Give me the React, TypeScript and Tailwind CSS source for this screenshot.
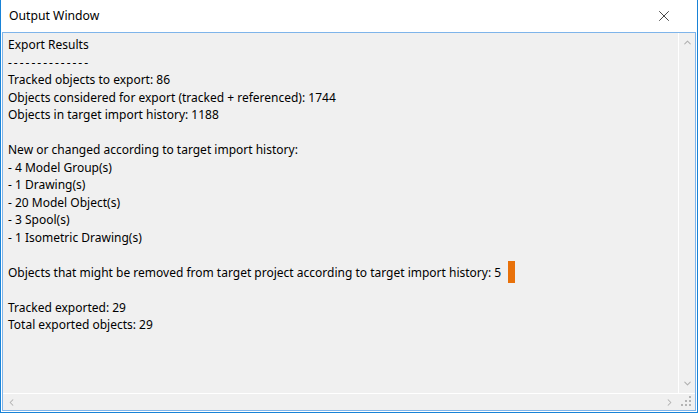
import { ChevronUp, ChevronDown, ChevronLeft, ChevronRight, X } from 'lucide-react';

const lines = [
  'Export Results',
  '--------------',
  'Tracked objects to export: 86',
  'Objects considered for export (tracked + referenced): 1744',
  'Objects in target import history: 1188',
  '',
  'New or changed according to target import history:',
  '- 4 Model Group(s)',
  '- 1 Drawing(s)',
  '- 20 Model Object(s)',
  '- 3 Spool(s)',
  '- 1 Isometric Drawing(s)',
  '',
  'Objects that might be removed from target project according to target import history: 5',
  '',
  'Tracked exported: 29',
  'Total exported objects: 29',
];

function Grip() {
  return (
    <svg width="12" height="12" viewBox="0 0 12 12" className="absolute right-[3px] bottom-[3px]">
      {[
        [9, 1], [9, 5], [5, 5], [9, 9], [5, 9], [1, 9],
      ].map(([x, y]) => (
        <rect key={`${x}-${y}`} x={x} y={y} width="2" height="2" fill="#b4b4b4" />
      ))}
    </svg>
  );
}

export default function App() {
  return (
    <div className="w-[698px] h-[413px] flex flex-col bg-white border-x border-b border-[#1883d7] font-['Segoe_UI','Noto_Sans',sans-serif] overflow-hidden">
      <div className="h-[32px] flex items-center justify-between pl-[8px] pr-[24px] shrink-0">
        <span className="text-[12.2px] text-black">Output Window</span>
        <X className="w-[18px] h-[18px] text-[#333]" strokeWidth={1.2} />
      </div>
      <div className="flex-1 flex flex-col mx-[1px] mb-[1px] border border-[#7eb4ea] bg-[#f0f0f0] min-h-0">
        <div className="flex-1 flex min-h-0">
          <div className="flex-1 px-[5px] pt-[3px] text-[12px] leading-[17.5px] text-black whitespace-pre">
            {lines.map((l, i) => (
              <div key={i} className="flex items-center h-[17.5px]">
                <span className={i === 1 ? 'tracking-[2px]' : ''}>{l || ' '}</span>
                {i === 13 && <span className="ml-[7px] inline-block w-[7px] h-[22px] bg-[#e8710a]" />}
              </div>
            ))}
          </div>
          <div className="w-[17px] flex flex-col justify-between items-center border-l border-white">
            <ChevronUp className="w-[11px] h-[11px] mt-[4px] text-[#b0b0b0]" strokeWidth={2.2} />
            <ChevronDown className="w-[11px] h-[11px] mb-[4px] text-[#b0b0b0]" strokeWidth={2.2} />
          </div>
        </div>
        <div className="h-[17px] flex border-t border-white">
          <div className="flex-1 flex justify-between items-center px-[3px]">
            <ChevronLeft className="w-[11px] h-[11px] text-[#b0b0b0]" strokeWidth={2.2} />
            <ChevronRight className="w-[11px] h-[11px] text-[#b0b0b0]" strokeWidth={2.2} />
          </div>
          <div className="relative w-[17px]">
            <Grip />
          </div>
        </div>
      </div>
    </div>
  );
}
